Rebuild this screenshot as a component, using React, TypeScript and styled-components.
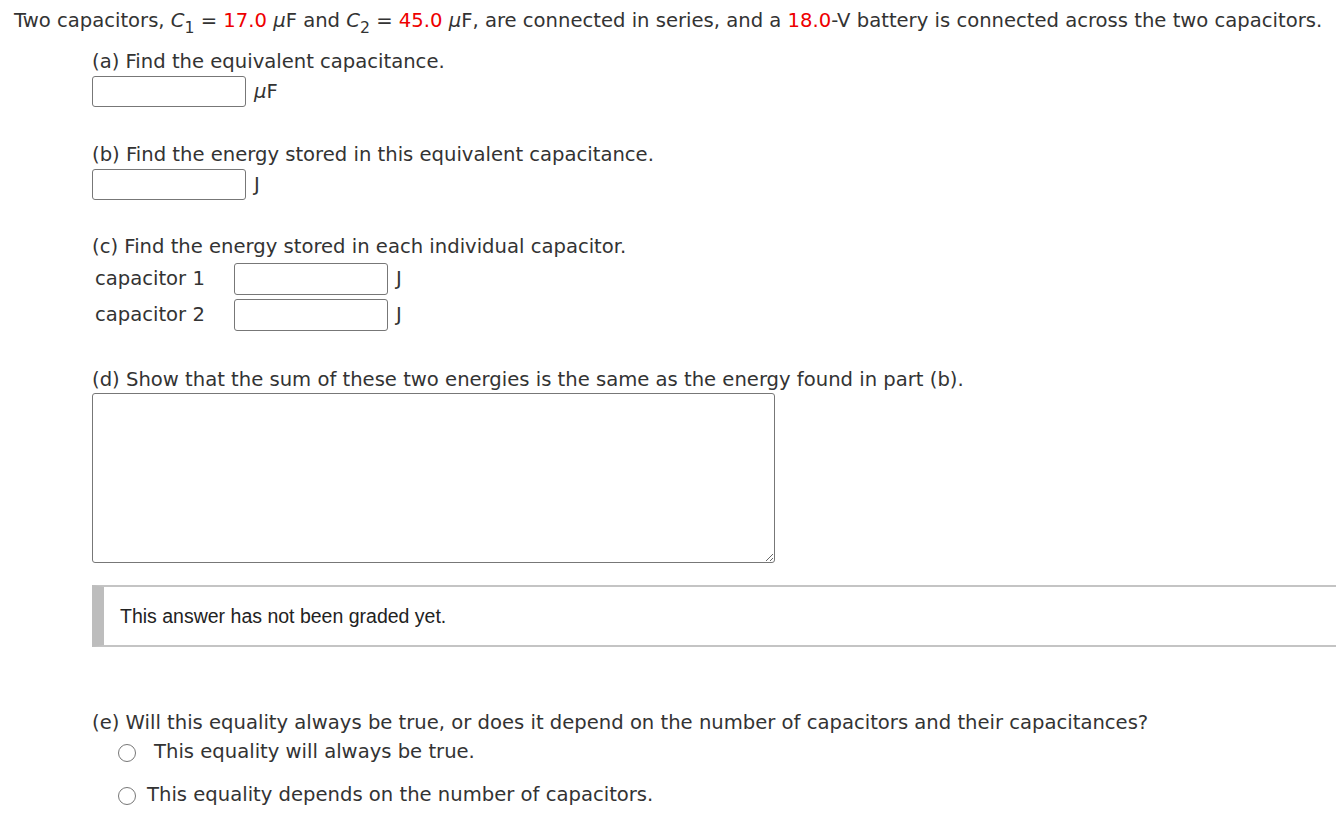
import * as React from 'react';
import styled, { createGlobalStyle } from 'styled-components';

const GlobalStyle = createGlobalStyle`
  html, body { margin: 0; padding: 0; background: #fff; }
  body {
    font-family: "DejaVu Sans", Verdana, sans-serif;
    color: #333;
  }
`;

const Page = styled.div`
  padding: 7px 0 0 14px;
  font-size: 19.6px;
  line-height: 26px;
`;

/* text lines sit 1px lower in their 26px slot, without moving what follows */
const Line = styled.div`
  box-sizing: border-box;
  height: 26px;
  padding-top: 1px;
  white-space: nowrap;
`;

const Question = styled(Line)``;

const Red = styled.span`
  color: #e00;
`;

const Var = styled.i`
  font-style: italic;
`;

const Sub = styled.sub`
  font-size: 0.8em;
  vertical-align: -0.4em;
  line-height: 0;
`;

const Parts = styled.div`
  padding-left: 78px;
`;

const Part = styled.div<{ $gap: number }>`
  margin-top: ${(p) => p.$gap}px;
`;

const Prompt = styled(Line)``;

const AnswerRow = styled.div`
  display: flex;
  align-items: center;
  gap: 8px;
  padding-top: 2px;
`;

const NumInput = styled.input<{ $h?: number }>`
  box-sizing: border-box;
  width: 154px;
  height: ${(p) => p.$h ?? 31}px;
  margin: 0;
  border: 1px solid #777;
  border-radius: 3px;
  font: inherit;
`;

const Unit = styled.span``;

const LabelRow = styled.div<{ $first?: boolean }>`
  display: grid;
  grid-template-columns: 131px auto auto;
  justify-content: start;
  align-items: center;
  column-gap: 8px;
  height: 36px;
  margin-top: ${(p) => (p.$first ? 2 : 0)}px;
  padding-left: 3px;
`;

const Essay = styled.textarea`
  display: block;
  box-sizing: border-box;
  width: 683px;
  height: 170px;
  margin: 1px 0 0;
  border: 1px solid #777;
  border-radius: 3px;
  font: inherit;
`;

const Feedback = styled.div`
  display: flex;
  align-items: center;
  box-sizing: border-box;
  height: 62px;
  margin-top: 22px;
  padding-left: 16px;
  border-top: 2px solid #c4c4c4;
  border-bottom: 2px solid #c4c4c4;
  border-left: 12px solid #bdbdbd;
  font-family: "Liberation Sans", Arial, sans-serif;
  font-size: 19.5px;
  color: #222;
`;

const Options = styled.div`
  display: flex;
  flex-direction: column;
  gap: 9px;
  padding-left: 26px;
`;

const Option = styled.label<{ $textGap: number }>`
  display: flex;
  align-items: center;
  gap: ${(p) => p.$textGap}px;
  height: 34px;
`;

const Radio = styled.span`
  box-sizing: border-box;
  flex: none;
  width: 18px;
  height: 18px;
  margin-top: 1px;
  border: 1.5px solid #777;
  border-radius: 50%;
  background: #fff;
`;

export default function App() {
  return (
    <>
      <GlobalStyle />
      <Page>
        <Question>
          Two capacitors, <Var>C</Var><Sub>1</Sub> = <Red>17.0</Red> <Var>μ</Var>F and{' '}
          <Var>C</Var><Sub>2</Sub> = <Red>45.0</Red> <Var>μ</Var>F, are connected in series, and a{' '}
          <Red>18.0</Red>-V battery is connected across the two capacitors.
        </Question>
        <Parts>
          <Part $gap={15}>
            <Prompt>(a) Find the equivalent capacitance.</Prompt>
            <AnswerRow>
              <NumInput />
              <Unit><Var>μ</Var>F</Unit>
            </AnswerRow>
          </Part>
          <Part $gap={34}>
            <Prompt>(b) Find the energy stored in this equivalent capacitance.</Prompt>
            <AnswerRow>
              <NumInput />
              <Unit>J</Unit>
            </AnswerRow>
          </Part>
          <Part $gap={33}>
            <Prompt>(c) Find the energy stored in each individual capacitor.</Prompt>
            <LabelRow $first>
              <span>capacitor 1</span>
              <NumInput $h={32} />
              <Unit>J</Unit>
            </LabelRow>
            <LabelRow>
              <span>capacitor 2</span>
              <NumInput $h={32} />
              <Unit>J</Unit>
            </LabelRow>
          </Part>
          <Part $gap={33}>
            <Prompt>(d) Show that the sum of these two energies is the same as the energy found in part (b).</Prompt>
            <Essay />
            <Feedback>This answer has not been graded yet.</Feedback>
          </Part>
          <Part $gap={62}>
            <Prompt>(e) Will this equality always be true, or does it depend on the number of capacitors and their capacitances?</Prompt>
            <Options>
              <Option $textGap={18}>
                <Radio />
                <span>This equality will always be true.</span>
              </Option>
              <Option $textGap={11}>
                <Radio />
                <span>This equality depends on the number of capacitors.</span>
              </Option>
            </Options>
          </Part>
        </Parts>
      </Page>
    </>
  );
}
